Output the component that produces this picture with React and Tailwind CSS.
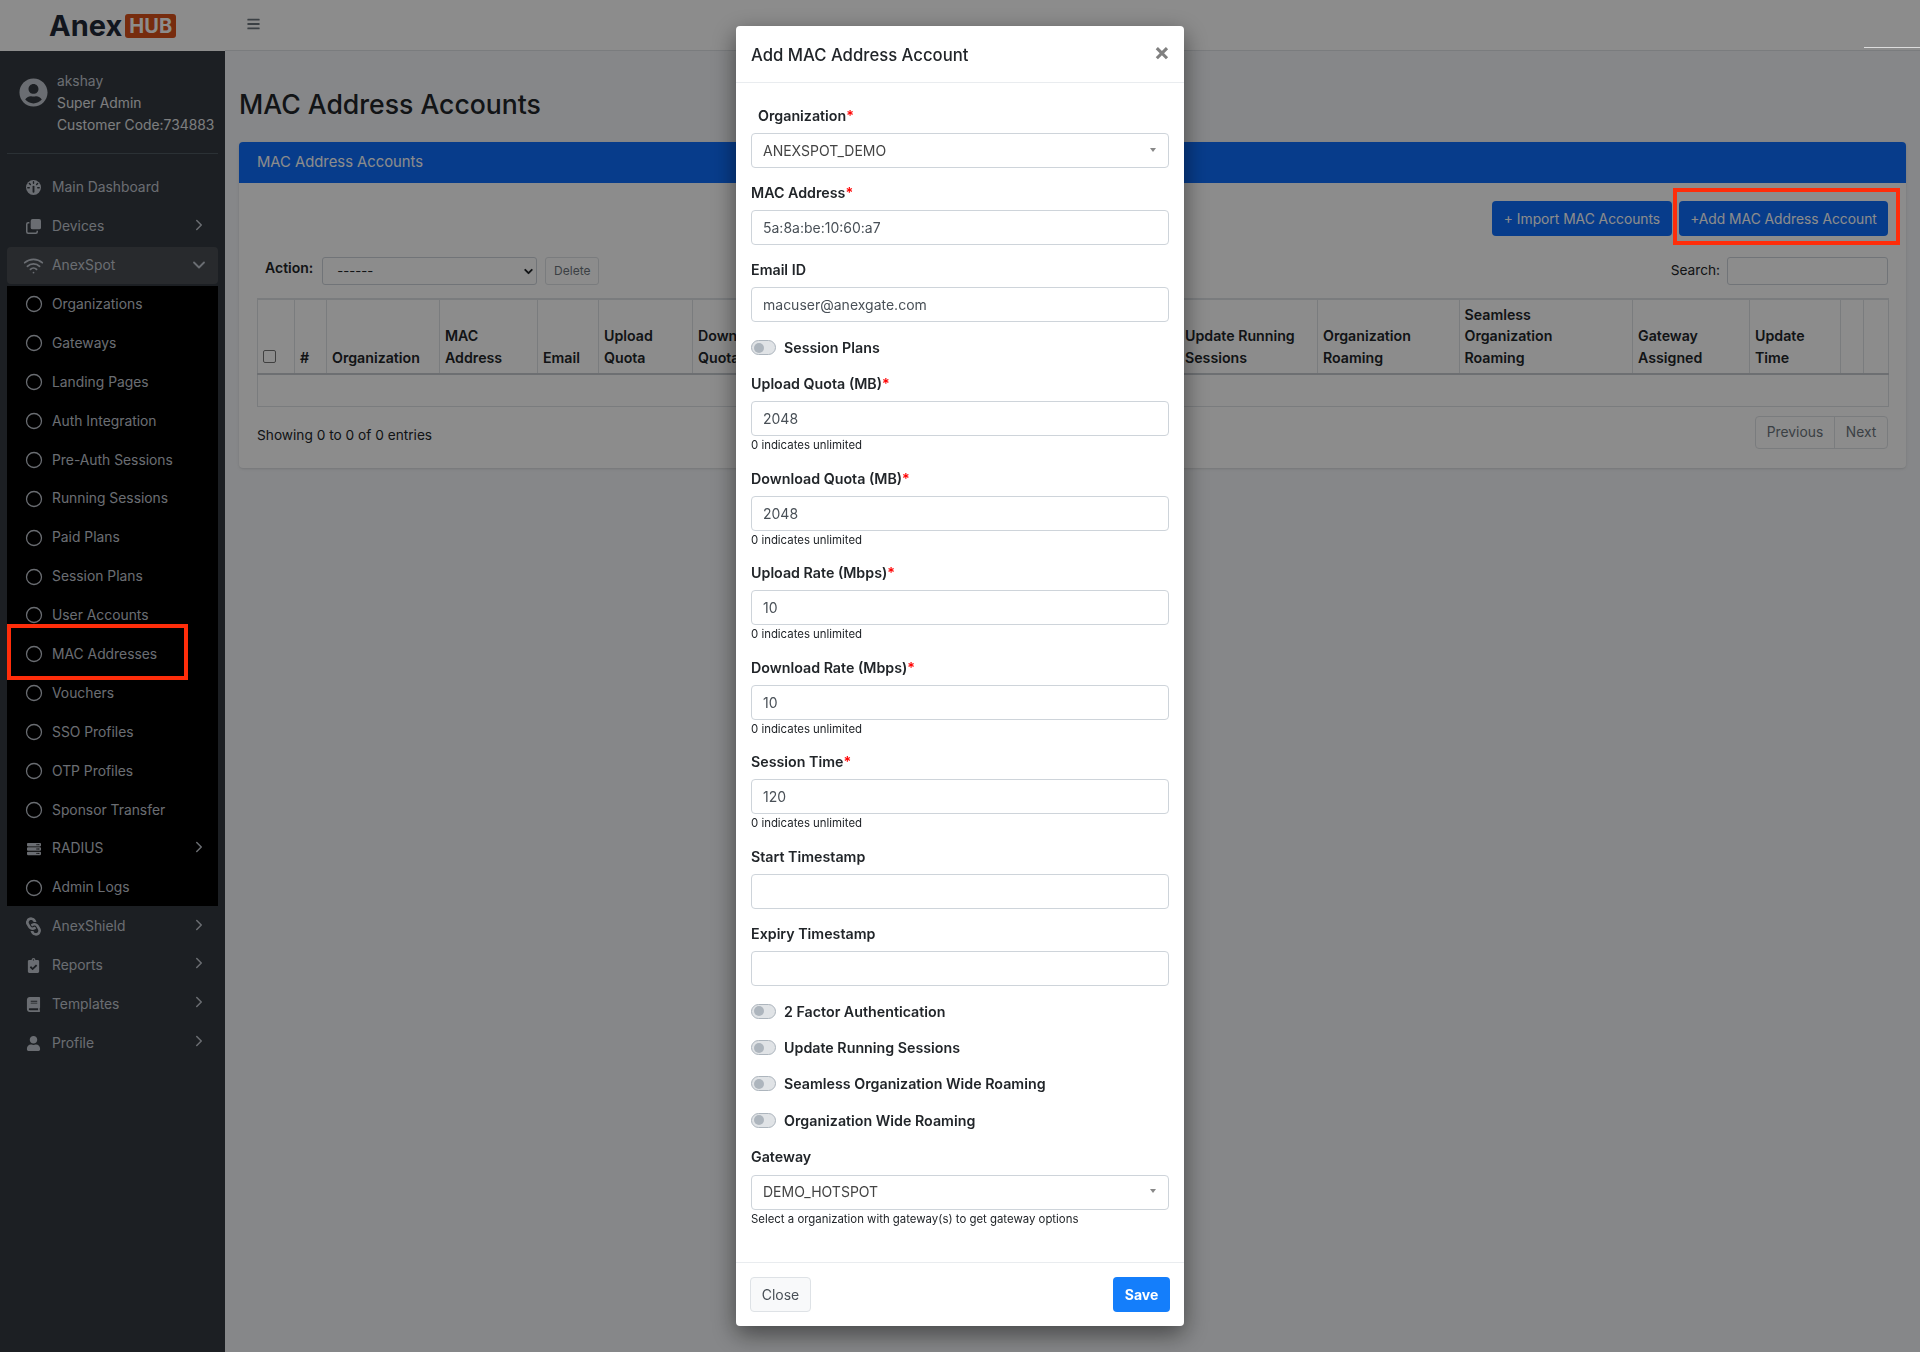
import React from "react";
import { FaClipboardCheck, FaBook, FaUser, FaUserCircle, FaBars, FaServer, FaLink } from "react-icons/fa";
import { ChevronRight, ChevronDown, Wifi, Circle } from "lucide-react";

const GaugeIcon = ({ className }) => (
  <svg viewBox="0 0 16 16" className={className}>
    <circle cx="8" cy="8" r="8" fill="currentColor" />
    <g stroke="#343a40" strokeWidth="1.5" strokeLinecap="round">
      <path d="M8 1.8v1.6M3.6 3.8l1.1 1.1M12.4 3.8l-1.1 1.1M1.9 8.2h1.6M12.5 8.2h1.6" />
      <path d="M8 7v5.5" strokeWidth="2" />
    </g>
  </svg>
);

const DevicesIcon = ({ className }) => (
  <svg viewBox="0 0 16 16" className={className} fill="none">
    <rect x="5" y="0" width="11" height="11" rx="2" fill="currentColor" />
    <path d="M3.6 4H2.4A1.6 1.6 0 0 0 .8 5.6v8a1.6 1.6 0 0 0 1.6 1.6h8a1.6 1.6 0 0 0 1.6-1.6v-1.2" stroke="currentColor" strokeWidth="1.6" />
  </svg>
);

const RingIcon = ({ className }) => <Circle className={className} strokeWidth={1.7} />;
const WifiIcon = ({ className }) => <Wifi className={className} strokeWidth={2} />;

const NavRow = ({ icon: Icon, label, arrow, active, iconClass = "w-[15px] h-[15px]" }) => (
  <div
    className={`flex items-center h-[36.3px] mb-[2.6px] last:mb-0 rounded text-[13.85px] text-[#c2c7d0] ${
      active ? "bg-[#494e53]" : ""
    }`}
  >
    <div className="w-[45px] pl-[8px] flex items-center justify-center shrink-0">
      <Icon className={iconClass} />
    </div>
    <span className="flex-1">{label}</span>
    {arrow === "right" && <ChevronRight className="w-[18px] h-[18px] mr-[10px] -mt-[4px]" strokeWidth={2} />}
    {arrow === "down" && <ChevronDown className="w-[20px] h-[20px] mr-[9px]" strokeWidth={2.2} />}
  </div>
);

const subItems = [
  "Organizations",
  "Gateways",
  "Landing Pages",
  "Auth Integration",
  "Pre-Auth Sessions",
  "Running Sessions",
  "Paid Plans",
  "Session Plans",
  "User Accounts",
  "MAC Addresses",
  "Vouchers",
  "SSO Profiles",
  "OTP Profiles",
  "Sponsor Transfer",
];

const Sidebar = () => (
  <aside className="w-[225px] shrink-0 bg-[#343a40] min-h-[1352px]">
    <div className="h-[51px] bg-white flex items-center pl-[49px] gap-[3px]">
      <span className="text-[#1f2937] text-[29px] font-bold leading-none">Anex</span>
      <span className="bg-[#d9501a] text-white text-[20px] leading-[24px] font-bold rounded-[3px] w-[51px] text-center">
        HUB
      </span>
    </div>
    <div className="mx-[7px] h-[103px] border-b border-[#4f5962] flex items-start pt-[19px] pl-[12px]">
      <FaUserCircle className="w-[29px] h-[29px] mt-[8px] text-[#c2c7d0] shrink-0" />
      <div className="pl-[9px] text-[13.85px] leading-[22px] text-[#c2c7d0] whitespace-nowrap">
        <div>akshay</div>
        <div className="text-[#e3e5e8]">Super Admin</div>
        <div className="text-[#e3e5e8]">Customer Code:734883</div>
      </div>
    </div>
    <nav className="px-[7px] pt-[15.5px]">
      <NavRow icon={GaugeIcon} label="Main Dashboard" />
      <NavRow icon={DevicesIcon} label="Devices" arrow="right" />
      <NavRow icon={WifiIcon} label="AnexSpot" arrow="down" active iconClass="w-[21px] h-[21px]" />
      <div className="bg-black mb-[2.6px]">
        {subItems.map((s) => (
          <NavRow key={s} icon={RingIcon} label={s} iconClass="w-[18px] h-[18px]" />
        ))}
        <NavRow icon={FaServer} label="RADIUS" arrow="right" iconClass="w-[16px] h-[14px]" />
        <NavRow icon={RingIcon} label="Admin Logs" iconClass="w-[18px] h-[18px]" />
      </div>
      <NavRow icon={FaLink} label="AnexShield" arrow="right" iconClass="w-[17px] h-[17px] rotate-[105deg]" />
      <NavRow icon={FaClipboardCheck} label="Reports" arrow="right" />
      <NavRow icon={FaBook} label="Templates" arrow="right" />
      <NavRow icon={FaUser} label="Profile" arrow="right" />
    </nav>
  </aside>
);

const columns = [
  ["", 37],
  ["#", 32],
  ["Organization", 113],
  ["MAC Address", 98],
  ["Email", 61],
  ["Upload Quota", 94],
  ["Download Quota", 85],
  ["Upload Rate", 70],
  ["Download Rate", 85],
  ["Session Time", 70],
  ["Start Time", 70],
  ["Expiry Time", 107],
  ["Update Running Sessions", 138],
  ["Organization Roaming", 141.5],
  [
    <>
      Seamless
      <br />
      Organization
      <br />
      Roaming
    </>,
    173.5,
  ],
  ["Gateway Assigned", 117],
  ["Update Time", 91],
  ["", 23],
  ["", 25],
];

const MainContent = () => (
  <main className="flex-1 min-w-0 bg-[#f4f6f9] text-[#212529]">
    <div className="h-[51px] bg-white border-b border-[#dee2e6] flex items-center pl-[22px] pb-[2px]">
      <FaBars className="w-[13px] h-[14px] text-[#6c757d]" />
    </div>
    <div className="px-[14px]">
      <h1 className="mt-[32px] mb-[17px] text-[26.6px] leading-[42px] font-medium">MAC Address Accounts</h1>
      <div className="bg-white rounded shadow h-[326px]">
        <div className="h-[41px] bg-[#0d6efd] rounded-t text-white text-[14.8px] flex items-center px-[18px]">
          MAC Address Accounts
        </div>
        <div className="px-[18px] pt-[18px]">
          <div className="flex justify-end gap-[7px] h-[35px]">
            <div className="w-[180px] rounded bg-[#0d6efd] text-white text-[13.8px] flex items-center justify-center pt-[1px]">
              + Import MAC Accounts
            </div>
            <div className="w-[209px] rounded bg-[#0d6efd] text-white text-[13.8px] flex items-center justify-center pt-[1px]">
              +Add MAC Address Account
            </div>
          </div>
          <div className="flex items-center justify-between mt-[21px] h-[28px]">
            <div className="flex items-center">
              <span className="ml-[8px] text-sm font-semibold -mt-[6px]">Action:</span>
              <div className="ml-[9px] w-[215px] h-[28px] border border-[#ced4da] rounded-[3px] flex items-center justify-between pl-[14px] pr-[1px] text-[13px]">
                <span className="pt-[2px]">------</span>
                <ChevronDown className="w-[13px] h-[13px]" strokeWidth={3.5} />
              </div>
              <div className="ml-[8px] w-[54px] h-[28px] border border-[#dee2e6] rounded-[3px] flex items-center justify-center text-xs text-[#6c757d]">
                Delete
              </div>
            </div>
            <div className="flex items-center gap-[7px]">
              <span className="text-[13.7px] -mt-[2px]">Search:</span>
              <div className="w-[161px] h-[28px] border border-[#ced4da] rounded-[3px]" />
            </div>
          </div>
          <table className="mt-[13px] table-fixed border-collapse w-[1631px] border border-[#dee2e6] border-t-2 text-[14.2px]">
            <colgroup>
              {columns.map(([, w], i) => (
                <col key={i} style={{ width: w }} />
              ))}
            </colgroup>
            <thead>
              <tr className="h-[75px] border-b-2 border-[#c6cbd0]">
                {columns.map(([name], i) => (
                  <th
                    key={i}
                    className="border-r border-[#dee2e6] align-bottom text-left font-semibold leading-[21.5px] px-[5px] pb-[5px]"
                  >
                    {i === 0 ? (
                      <div className="w-[13px] h-[13px] border border-[#767676] rounded-[2px] mb-[5px]" />
                    ) : (
                      name
                    )}
                  </th>
                ))}
              </tr>
            </thead>
            <tbody>
              <tr className="h-[32px]">
                <td colSpan={columns.length} />
              </tr>
            </tbody>
          </table>
          <div className="flex items-start justify-between mt-[9px]">
            <span className="text-[13.7px] mt-[9px]">Showing 0 to 0 of 0 entries</span>
            <div className="flex h-[33px] border border-[#dee2e6] rounded text-[13.8px] text-[#6c757d] items-center">
              <span className="w-[79px] h-full border-r border-[#dee2e6] flex items-center justify-center">Previous</span>
              <span className="w-[52px] flex items-center justify-center">Next</span>
            </div>
          </div>
        </div>
      </div>
    </div>
  </main>
);

const FieldLabel = ({ children, required, className = "" }) => (
  <div className={`text-[14.25px] font-semibold leading-[21px] mb-[7px] text-[#212529] ${className}`}>
    {children}
    {required && <span className="text-[#ff0000]">*</span>}
  </div>
);

const TextInput = ({ value }) => (
  <div className="h-[35px] border border-[#ced4da] rounded-[4px] flex items-center pl-[11px] pt-[1px] text-sm text-[#495057]">
    {value}
  </div>
);

const SelectBox = ({ value }) => (
  <div className="h-[35px] border border-[#ced4da] rounded-[4px] flex items-center justify-between pl-[11px] pr-[12px] text-sm text-[#444444]">
    <span>{value}</span>
    <span className="w-0 h-0 border-x-[3.5px] border-x-transparent border-t-[4px] border-t-[#888888] -mt-[2px]" />
  </div>
);

const Help = ({ children }) => (
  <div className="h-[17.5px] text-[11.4px] leading-[18px] text-[#212529]">{children}</div>
);

const Field = ({ label, required, value, help }) => (
  <div className="mb-[14px]">
    <FieldLabel required={required}>{label}</FieldLabel>
    <TextInput value={value} />
    {help && <Help>0 indicates unlimited</Help>}
  </div>
);

const Toggle = ({ label, className = "mb-[15.3px]" }) => (
  <div className={`flex items-center h-[21px] text-[14.25px] font-semibold text-[#212529] ${className}`}>
    <div className="w-[25px] h-[15px] rounded-full bg-[#e0e3e6] border border-[#adb5bd] flex items-center pl-[2px] mr-[8px]">
      <div className="w-[10px] h-[10px] rounded-full bg-[#adb5bd]" />
    </div>
    {label}
  </div>
);

const Modal = () => (
  <div className="fixed inset-0 bg-black/45">
    <div className="mx-auto mt-[26px] w-[448px] h-[1300px] bg-white rounded shadow-[0_8px_24px_rgba(0,0,0,0.5)] flex flex-col">
      <div className="h-[57px] border-b border-[#e9ecef] flex items-center justify-between pl-[15px] pr-[14px] shrink-0">
        <span className="text-[16.7px] font-medium text-[#212529] mt-[3px]">Add MAC Address Account</span>
        <span className="text-[24px] leading-none font-bold text-[#808080] -mt-[4px]">×</span>
      </div>
      <div className="flex-1 px-[15px] pt-[22px]">
        <div className="mb-[14px]">
          <FieldLabel required className="pl-[7px]">Organization</FieldLabel>
          <SelectBox value="ANEXSPOT_DEMO" />
        </div>
        <Field label="MAC Address" required value="5a:8a:be:10:60:a7" />
        <div className="mb-[15px]">
          <Field label="Email ID" value="macuser@anexgate.com" />
        </div>
        <Toggle label="Session Plans" />
        <Field label="Upload Quota (MB)" required value="2048" help />
        <Field label="Download Quota (MB)" required value="2048" help />
        <Field label="Upload Rate (Mbps)" required value="10" help />
        <Field label="Download Rate (Mbps)" required value="10" help />
        <Field label="Session Time" required value="120" help />
        <Field label="Start Timestamp" />
        <Field label="Expiry Timestamp" />
        <div className="h-[1px]" />
        <Toggle label="2 Factor Authentication" />
        <Toggle label="Update Running Sessions" />
        <Toggle label="Seamless Organization Wide Roaming" />
        <Toggle label="Organization Wide Roaming" />
        <FieldLabel className="mb-[8px]">Gateway</FieldLabel>
        <SelectBox value="DEMO_HOTSPOT" />
        <Help>Select a organization with gateway(s) to get gateway options</Help>
      </div>
      <div className="h-[64px] border-t border-[#e9ecef] flex items-center justify-between pl-[14px] pr-[14px] shrink-0">
        <div className="w-[61px] h-[35px] bg-[#f8f9fa] border border-[#dee2e6] rounded text-sm text-[#495057] flex items-center justify-center">
          Close
        </div>
        <div className="w-[57px] h-[35px] bg-[#147efb] rounded text-sm font-bold text-white flex items-center justify-center">
          Save
        </div>
      </div>
    </div>
  </div>
);

export default function App() {
  return (
    <div className="relative flex min-h-[1352px] font-['Inter',sans-serif]">
      <Sidebar />
      <MainContent />
      <Modal />
      {/* red annotation boxes on top of the screenshot */}
      <div className="absolute left-[7px] top-[624px] w-[181px] h-[56px] border-[4px] border-[#ff2d0a]" />
      <div className="absolute left-[1673px] top-[188px] w-[227px] h-[57px] border-[4px] border-[#ff2d0a]" />
      <div className="absolute left-[1864px] top-[47px] w-[56px] h-px bg-[#dddddd]" />
    </div>
  );
}
